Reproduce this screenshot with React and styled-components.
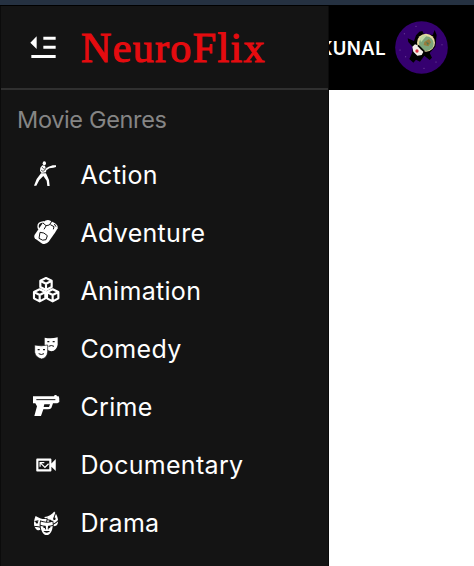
import React from 'react';
import styled, { createGlobalStyle } from 'styled-components'
import { GiDramaMasks } from 'react-icons/gi'
import { MdOutlineMissedVideoCall } from 'react-icons/md'

const GlobalStyle = createGlobalStyle`
    * {
        box-sizing: border-box;
    }

    body {
        margin: 0;
        background: #fff;
        font-family: Inter, "Liberation Sans", sans-serif;
        overflow: hidden;
    }
`

const Page = styled.div`
    position: relative;
    height: 566px;
    background: #fff;
    overflow: hidden;
`

const TopBar = styled.header`
    display: flex;
    align-items: center;
    justify-content: flex-end;
    gap: 9px;
    height: 90px;
    padding: 0 26px 0 0;
    background: #000;
    border-top: 5px solid #253141;
`

const UserName = styled.span`
    color: #fff;
    font-size: 18.5px;
    font-weight: 600;
    line-height: 24px;
    letter-spacing: 0.4px;
`

const Avatar = styled.svg`
    display: block;
    width: 53px;
    height: 53px;
`

const Drawer = styled.aside`
    position: absolute;
    top: 6px;
    left: 0;
    bottom: 0;
    width: 329px;
    background: #141414;
    border-left: 1px solid #0b0b0b;
    border-right: 1px solid #0b0b0b;
`

const DrawerHeader = styled.div`
    display: flex;
    align-items: center;
    height: 84px;
    padding-left: 29px;
    border-bottom: 2px solid #303030;
`

const MenuIcon = styled.svg`
    display: block;
    width: 28px;
    height: 28px;
    fill: #fff;
`

const Logo = styled.h1`
    margin: 2px 0 0 23px;
    color: #e50b0f;
    font-family: "Liberation Serif", serif;
    font-size: 42px;
    font-weight: 400;
    line-height: 48px;
    letter-spacing: 1.35px;
    -webkit-text-stroke: 1.1px #e50b0f;
`

const SectionTitle = styled.h2`
    margin: 0;
    padding: 15px 0 11px 16px;
    color: #858585;
    font-size: 23.5px;
    font-weight: 400;
    line-height: 30px;
    letter-spacing: -0.35px;
`

const GenreList = styled.ul`
    margin: 0;
    padding: 0;
    list-style: none;
`

const GenreItem = styled.li`
    display: flex;
    align-items: center;
    gap: 20.5px;
    height: 58px;
    padding-left: 31px;
    color: #fff;
`

const GenreIcon = styled.span`
    display: flex;
    width: 28px;
    height: 28px;
    align-items: center;
    justify-content: center;

    svg {
        display: block;
        width: ${props => props.$size || 28}px;
        height: ${props => props.$size || 28}px;
    }
`

const GenreName = styled.span`
    font-size: 25px;
    line-height: 32px;
    letter-spacing: 0.3px;
`

const Fighter = () => (
    <svg viewBox="36 18 84 84" fill="#fff">
        <ellipse cx="73" cy="25" rx="5" ry="6" />
        <path d="M67 31 L61 38 L60 48 L65 54 L78 52 L79 46 L88 40 L100 38 L108 36 V31 L98 31 L86 35 L77 39 L75 32Z" />
        <path d="M63 55 L50 72 L42 92 H49 L58 75 L70 63 L80 77 L82 93 H89 L87 75 L78 55Z" />
        <path d="M66 36 L72 43 L83 36 M63 45 L69 49 L77 43" fill="none" stroke="#141414" strokeWidth="2" />
    </svg>
)

const Backpack = () => (
    <svg viewBox="36 21 84 84">
        <path d="M56 52 Q50 35 63 31 L73 29" fill="none" stroke="#fff" strokeWidth="4" />
        <path d="M70 31 Q80 21 91 26 L104 33 Q115 40 113 49 L106 61 L87 88 Q79 99 67 95 L48 82 Q40 76 44 68Z" fill="#fff" />
        <path d="M60 61 Q72 60 82 71 L78 83 Q68 88 57 79 Z M69 33 L78 41 L88 39 L96 27 M78 42 L72 52 M91 38 L102 44 L100 52 M103 36 L108 44" fill="none" stroke="#141414" strokeWidth="3" />
    </svg>
)

const Cube = ({ x, y }) => (
    <g transform={`translate(${x} ${y})`}>
        <path d="M0 -18 L17 -10 V9 L0 18 L-17 9 V-10Z M-16 -9 L0 -1 L16 -9 M0 -1 V17" />
    </g>
)

const Cubes = () => (
    <svg viewBox="36 21 84 84" fill="none" stroke="#fff" strokeWidth="6.5" strokeLinejoin="round">
        <Cube x={78} y={42} />
        <Cube x={59} y={76} />
        <Cube x={98} y={76} />
    </svg>
)

const ComedyMasks = () => (
    <svg viewBox="36 21 84 84">
        <path d="M74 29 Q93 33 113 28 V50 Q110 68 94 70 Q76 66 74 51Z" fill="#fff" />
        <path d="M86 55 Q94 50 102 55" fill="none" stroke="#141414" strokeWidth="3" />
        <path d="M82 41 H88 M98 41 H104" stroke="#141414" strokeWidth="4" />
        <path d="M44 51 Q64 56 83 51 V72 Q81 90 65 93 Q47 89 44 73Z" fill="#fff" stroke="#141414" strokeWidth="2" />
        <path d="M56 77 Q64 82 72 77" fill="none" stroke="#141414" strokeWidth="3" />
        <path d="M53 65 H59 M69 65 H75" stroke="#141414" strokeWidth="4" />
    </svg>
)

const Pistol = () => (
    <svg viewBox="36 21 84 84">
        <path d="M39 31 H102 L104 27 H109 L111 31 H116 Q119 35 118 48 L112 52 H99 L94 66 Q91 70 84 70 H70 L63 90 H43 L51 61 L46 52 H39Z" fill="#fff" />
        <path d="M49 41 H106" stroke="#141414" strokeWidth="3" />
        <path d="M73 55 H90 L87 63 H71Z" fill="#141414" />
    </svg>
)

const genres = [
    { name: 'Action', icon: <Fighter /> },
    { name: 'Adventure', icon: <Backpack /> },
    { name: 'Animation', icon: <Cubes /> },
    { name: 'Comedy', icon: <ComedyMasks /> },
    { name: 'Crime', icon: <Pistol /> },
    { name: 'Documentary', icon: <MdOutlineMissedVideoCall />, size: 26 },
    { name: 'Drama', icon: <GiDramaMasks />, size: 26 }
]

const UserAvatar = () => (
    <Avatar viewBox="15 16 159 159">
        <circle cx="94.5" cy="95.5" r="79" fill="#350070" />
        <path d="M53 68 L72 76 L78 59 L88 48 L97 46 L101 54 L128 58 L134 43 L140 58 L136 93 L119 112 L126 126 L119 133 L103 120 L90 138 L78 132 L70 141 L58 130 L66 111 L69 95 L55 79Z" fill="#000" />
        <circle cx="108" cy="81" r="27" fill="#e7d9a0" />
        <circle cx="109" cy="84" r="22" fill="#7da57b" />
        <path d="M89 67 Q99 56 111 59 L93 80Z" fill="#c0d7a3" />
        <path d="M103 79 L117 70 L123 80 L115 92 L101 88Z" fill="#987b3c" />
        <path d="M108 78 L117 83 L113 89Z" fill="#497d52" />
        <path d="M75 86 L83 89 L91 101 L101 107 L95 118 L82 120 L70 108 L67 93Z" fill="#f4eee8" />
        <circle cx="81" cy="106" r="5" fill="#d93443" />
        <path d="M84 89 L103 108" stroke="#000" strokeWidth="5" />
        <g fill="#8960ad">
            <circle cx="43" cy="54" r="1.5" />
            <circle cx="30" cy="103" r="1.5" />
            <circle cx="47" cy="123" r="1.5" />
            <circle cx="138" cy="139" r="1.5" />
            <circle cx="156" cy="87" r="1.5" />
            <circle cx="78" cy="32" r="1.5" />
            <circle cx="102" cy="158" r="1.5" />
        </g>
    </Avatar>
)

export default function App() {
    return (
        <Page>
            <GlobalStyle />
            <TopBar>
                <UserName>KUNAL</UserName>
                <UserAvatar />
            </TopBar>
            <Drawer>
                <DrawerHeader>
                    <MenuIcon viewBox="90 99 84 84">
                        <path d="M91 128 L110 109 V147Z M130 110 H167 V119 H130Z M130 137 H167 V146 H130Z M94 165 H167 V174 H94Z" />
                    </MenuIcon>
                    <Logo>NeuroFlix</Logo>
                </DrawerHeader>
                <SectionTitle>Movie Genres</SectionTitle>
                <GenreList>
                    {genres.map(genre => (
                        <GenreItem key={genre.name}>
                            <GenreIcon $size={genre.size}>{genre.icon}</GenreIcon>
                            <GenreName>{genre.name}</GenreName>
                        </GenreItem>
                    ))}
                </GenreList>
            </Drawer>
        </Page>
    )
}
